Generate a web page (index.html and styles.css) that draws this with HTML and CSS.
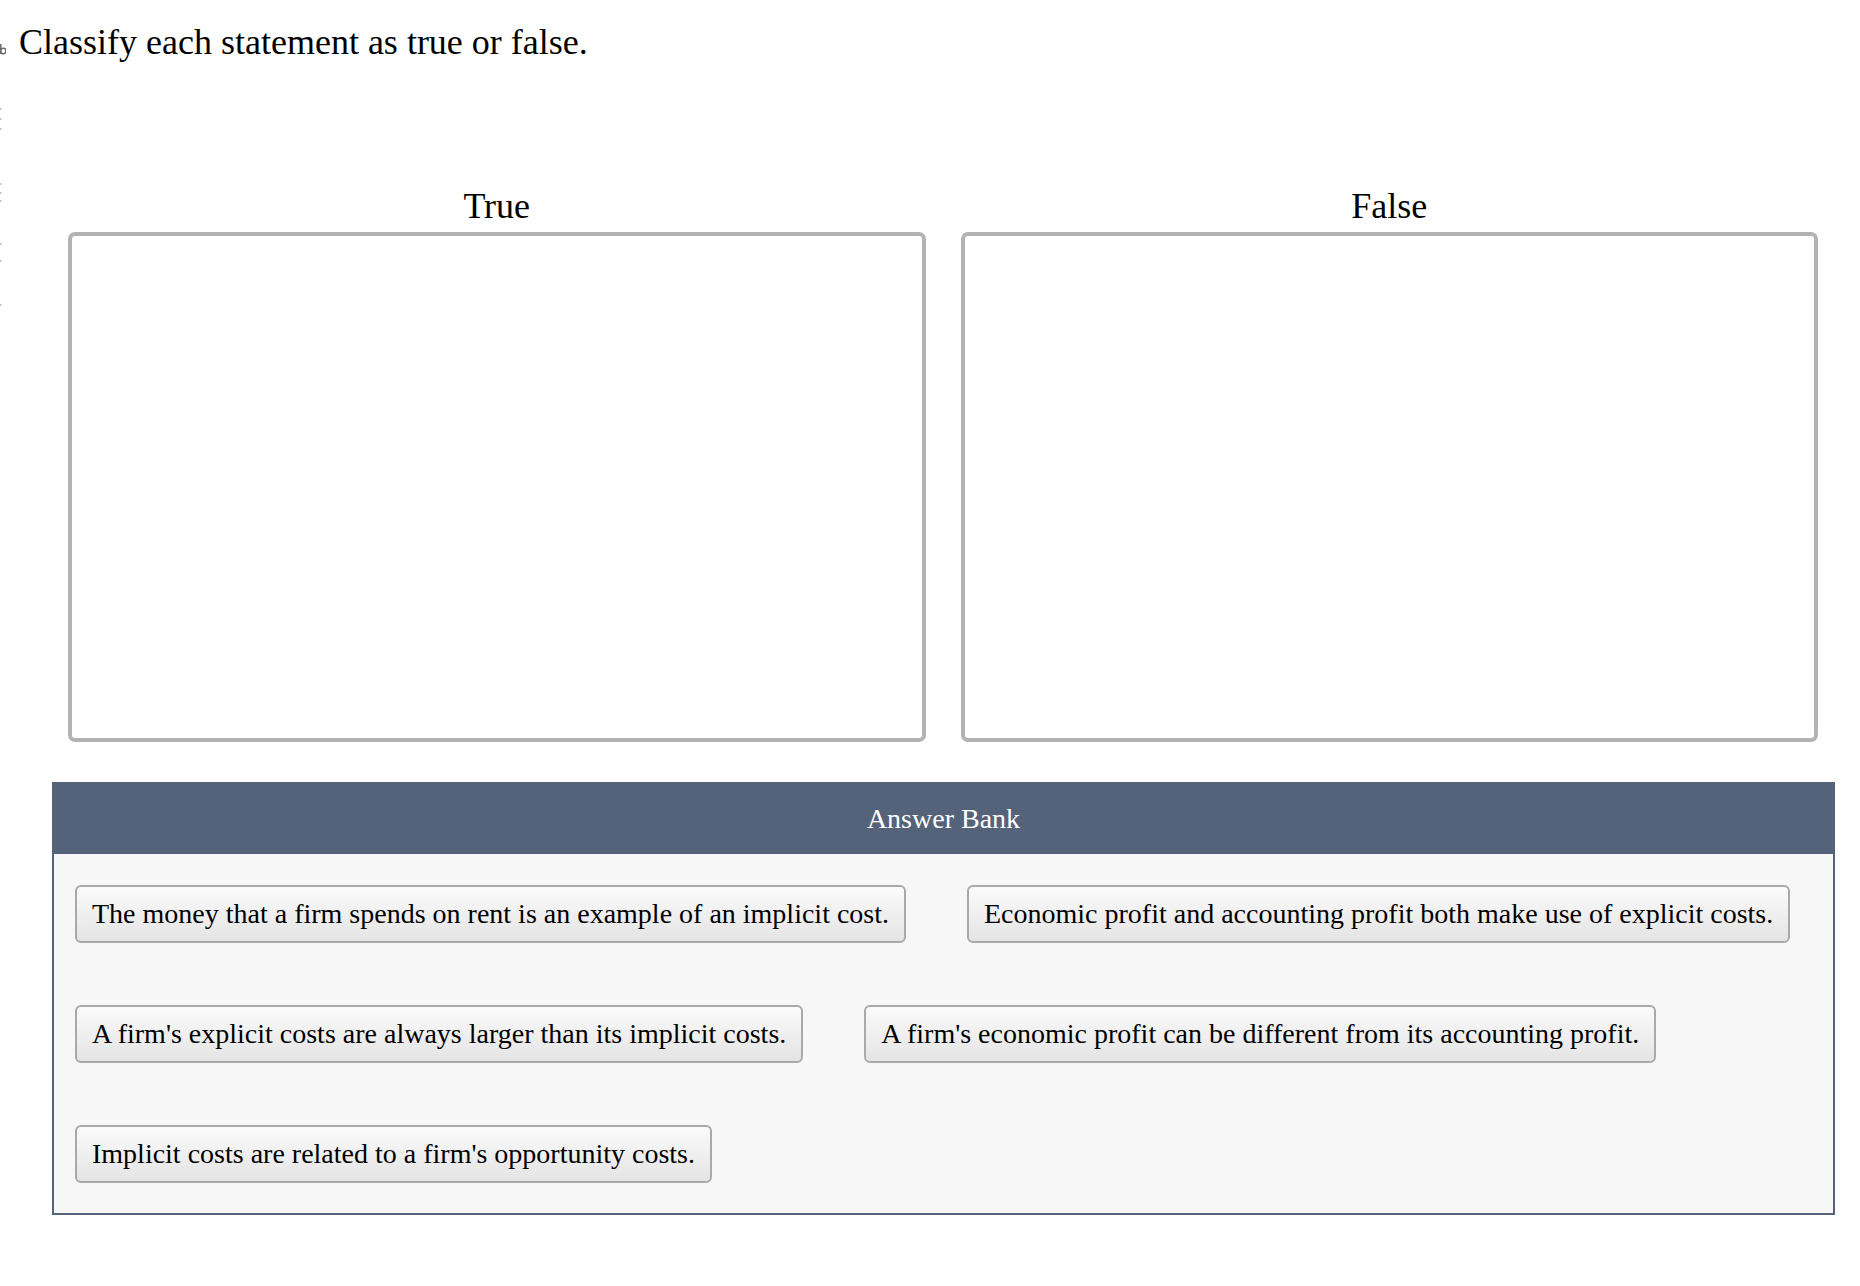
FILE: index.html
```html
<!DOCTYPE html>
<html>
<head>
    <meta charset="UTF-8">
    <title>Classify - True or False</title>
    <link rel="stylesheet" href="styles.css">
</head>

<body>
<div class="page">
    <!-- edge of the side toolbar, mostly scrolled out of view -->
    <div class="gutter">
        <svg width="6" height="320" viewBox="0 0 6 320">
            <circle cx="3.2" cy="51" r="2.8" fill="none" stroke="#6a6a6a" stroke-width="1.6"/>
            <line x1="0.8" y1="44" x2="0.8" y2="54" stroke="#6a6a6a" stroke-width="1.5"/>
            <g fill="#c4c4c4">
                <rect x="0" y="108" width="1.5" height="2"/>
                <rect x="0" y="118" width="1.5" height="2"/>
                <rect x="0" y="128" width="1.5" height="2"/>
                <rect x="0" y="183" width="1.5" height="2"/>
                <rect x="0" y="192" width="1.5" height="2"/>
                <rect x="0" y="200" width="1.5" height="2"/>
                <rect x="0" y="243" width="1.5" height="2"/>
                <rect x="0" y="260" width="1.5" height="2"/>
                <rect x="0" y="304" width="1.5" height="2"/>
            </g>
        </svg>
    </div>

    <main class="question">
        <h1 class="prompt">Classify each statement as true or false.</h1>

        <div class="bins">
            <section class="bin">
                <h2 class="bin-title">True</h2>
                <div class="bin-drop"></div>
            </section>
            <section class="bin">
                <h2 class="bin-title">False</h2>
                <div class="bin-drop"></div>
            </section>
        </div>

        <div class="bank">
            <div class="bank-head">Answer Bank</div>
            <div class="bank-body">
                <div class="chip">The money that a firm spends on rent is an example of an implicit cost.</div>
                <div class="chip">Economic profit and accounting profit both make use of explicit costs.</div>
                <div class="chip">A firm's explicit costs are always larger than its implicit costs.</div>
                <div class="chip">A firm's economic profit can be different from its accounting profit.</div>
                <div class="chip">Implicit costs are related to a firm's opportunity costs.</div>
            </div>
        </div>
    </main>
</div>
</body>
</html>
```

FILE: styles.css
```css
body {
    margin: 0;
    padding: 0;
    font-family: "Liberation Serif", "Times New Roman", serif;
    color: #000;
    background-color: #fff;
}

.page {
    display: flex;
}

.gutter {
    flex: none;
    width: 6px;
}

.gutter svg {
    display: block;
}

.question {
    flex: 1;
}

.prompt {
    margin: 21px 0 0 13px;
    font-size: 36px;
    font-weight: normal;
    line-height: 42px;
}

.bins {
    display: grid;
    grid-template-columns: 1fr 1fr;
    gap: 35px;
    margin: 122px 42px 0 62px;
}

.bin-title {
    margin: 0 0 5px;
    font-size: 36px;
    font-weight: normal;
    line-height: 42px;
    text-align: center;
}

.bin-drop {
    box-sizing: border-box;
    height: 510px;
    border: 4px solid #b3b3b3;
    border-radius: 7px;
    background-color: #fff;
}

.bank {
    margin: 40px 25px 0 46px;
    border: 2px solid #55637a;
}

.bank-head {
    background-color: #55637a;
    color: #fff;
    font-size: 28px;
    line-height: 70px;
    text-align: center;
}

.bank-body {
    display: flex;
    flex-wrap: wrap;
    gap: 62px 61px;
    padding: 31px 21px 30px;
    background-color: #f7f7f7;
}

.chip {
    padding: 11px 15px;
    border: 2px solid #a9a9a9;
    border-radius: 6px;
    background: linear-gradient(#fbfbfb, #e4e4e4);
    font-size: 28px;
    line-height: 32px;
    white-space: nowrap;
}
```
